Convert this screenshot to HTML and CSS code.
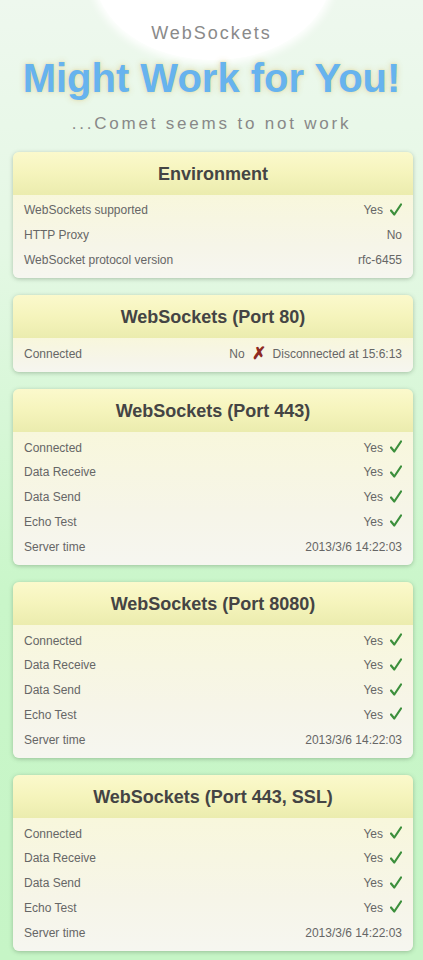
FILE: index.html
```html
<!DOCTYPE html>
<html lang="en">
<head>
    <meta charset="UTF-8">
    <meta name="viewport" content="width=device-width, initial-scale=1.0">
    <title>WebSockets Test</title>
    <link rel="stylesheet" href="styles.css">
</head>
<body>
    <header class="top">
        <div class="glow"></div>
        <h2 class="subtitle">WebSockets</h2>
        <h1 class="verdict">Might Work for You!</h1>
        <p class="note">...Comet seems to not work</p>
    </header>

    <div class="cards">
        <div class="card">
            <div class="card-head">Environment</div>
            <div class="card-body">
                <div class="row"><span>WebSockets supported</span><span class="val">Yes <svg class="ok" viewBox="0 0 12 13"><path d="M1 7.5 L4.3 11.5 L11 1.5"/></svg></span></div>
                <div class="row"><span>HTTP Proxy</span><span class="val">No</span></div>
                <div class="row"><span>WebSocket protocol version</span><span class="val">rfc-6455</span></div>
            </div>
        </div>

        <div class="card">
            <div class="card-head">WebSockets (Port 80)</div>
            <div class="card-body">
                <div class="row"><span>Connected</span><span class="val">No <i class="fail">&#10007;</i> Disconnected at 15:6:13</span></div>
            </div>
        </div>

        <div class="card">
            <div class="card-head">WebSockets (Port 443)</div>
            <div class="card-body">
                <div class="row"><span>Connected</span><span class="val">Yes <svg class="ok" viewBox="0 0 12 13"><path d="M1 7.5 L4.3 11.5 L11 1.5"/></svg></span></div>
                <div class="row"><span>Data Receive</span><span class="val">Yes <svg class="ok" viewBox="0 0 12 13"><path d="M1 7.5 L4.3 11.5 L11 1.5"/></svg></span></div>
                <div class="row"><span>Data Send</span><span class="val">Yes <svg class="ok" viewBox="0 0 12 13"><path d="M1 7.5 L4.3 11.5 L11 1.5"/></svg></span></div>
                <div class="row"><span>Echo Test</span><span class="val">Yes <svg class="ok" viewBox="0 0 12 13"><path d="M1 7.5 L4.3 11.5 L11 1.5"/></svg></span></div>
                <div class="row"><span>Server time</span><span class="val">2013/3/6 14:22:03</span></div>
            </div>
        </div>

        <div class="card">
            <div class="card-head">WebSockets (Port 8080)</div>
            <div class="card-body">
                <div class="row"><span>Connected</span><span class="val">Yes <svg class="ok" viewBox="0 0 12 13"><path d="M1 7.5 L4.3 11.5 L11 1.5"/></svg></span></div>
                <div class="row"><span>Data Receive</span><span class="val">Yes <svg class="ok" viewBox="0 0 12 13"><path d="M1 7.5 L4.3 11.5 L11 1.5"/></svg></span></div>
                <div class="row"><span>Data Send</span><span class="val">Yes <svg class="ok" viewBox="0 0 12 13"><path d="M1 7.5 L4.3 11.5 L11 1.5"/></svg></span></div>
                <div class="row"><span>Echo Test</span><span class="val">Yes <svg class="ok" viewBox="0 0 12 13"><path d="M1 7.5 L4.3 11.5 L11 1.5"/></svg></span></div>
                <div class="row"><span>Server time</span><span class="val">2013/3/6 14:22:03</span></div>
            </div>
        </div>

        <div class="card">
            <div class="card-head">WebSockets (Port 443, SSL)</div>
            <div class="card-body">
                <div class="row"><span>Connected</span><span class="val">Yes <svg class="ok" viewBox="0 0 12 13"><path d="M1 7.5 L4.3 11.5 L11 1.5"/></svg></span></div>
                <div class="row"><span>Data Receive</span><span class="val">Yes <svg class="ok" viewBox="0 0 12 13"><path d="M1 7.5 L4.3 11.5 L11 1.5"/></svg></span></div>
                <div class="row"><span>Data Send</span><span class="val">Yes <svg class="ok" viewBox="0 0 12 13"><path d="M1 7.5 L4.3 11.5 L11 1.5"/></svg></span></div>
                <div class="row"><span>Echo Test</span><span class="val">Yes <svg class="ok" viewBox="0 0 12 13"><path d="M1 7.5 L4.3 11.5 L11 1.5"/></svg></span></div>
                <div class="row"><span>Server time</span><span class="val">2013/3/6 14:22:03</span></div>
            </div>
        </div>
    </div>
</body>
</html>
```

FILE: styles.css
```css
* {
    margin: 0;
    padding: 0;
    box-sizing: border-box;
    font-family: "Liberation Sans", Arial, sans-serif;
}

body {
    background: linear-gradient(to bottom, #eef8ee 0px, #e4f8e4 250px, #c9f6c9 600px, #c6f5c6 100%);
    min-height: 960px;
    overflow: hidden;
}

.top {
    position: relative;
    text-align: center;
    padding-top: 22px;
    height: 152px;
}

.glow {
    position: absolute;
    left: 95px;
    top: -110px;
    width: 236px;
    height: 170px;
    border-radius: 50%;
    background: #fff;
    box-shadow: 0 0 8px 4px #fff;
}

.subtitle {
    position: relative;
    font-size: 18px;
    line-height: 22px;
    font-weight: normal;
    letter-spacing: 2px;
    color: #8a8a8a;
}

.verdict {
    position: relative;
    font-size: 40px;
    line-height: 46px;
    margin-top: 11px;
    color: #67b3ee;
    text-shadow: 0 0 6px rgba(225, 215, 160, 0.9), 0 0 2px rgba(230, 220, 170, 0.8);
}

.note {
    position: relative;
    margin-top: 12px;
    font-size: 17px;
    line-height: 22px;
    letter-spacing: 2.8px;
    color: #888;
}

.cards {
    width: 400px;
    margin-left: 13px;
    display: flex;
    flex-direction: column;
    gap: 17px;
}

.card {
    border-radius: 6px;
    overflow: hidden;
    box-shadow: 0 1px 4px rgba(60, 90, 60, 0.35);
}

.card-head {
    height: 43px;
    padding-top: 2px;
    line-height: 41px;
    text-align: center;
    font-size: 18px;
    font-weight: bold;
    color: #444;
    background: linear-gradient(to bottom, #fbf9cc 0%, #f5f4bc 50%, #ebecae 100%);
}

.card-body {
    padding: 3px 11px 6px;
    background: linear-gradient(to bottom, #f8f7dc 0%, #f6f5e8 60%, #f6f6f0 100%);
}

.row {
    display: flex;
    justify-content: space-between;
    align-items: center;
    height: 24.8px;
    font-size: 12px;
    color: #666;
}

.val {
    display: flex;
    align-items: center;
    gap: 7px;
}

.ok {
    width: 12px;
    height: 13px;
    margin-top: -2px;
    fill: none;
    stroke: #3c8f3c;
    stroke-width: 2.2;
    stroke-linecap: round;
    stroke-linejoin: round;
}

.fail {
    font-style: normal;
    font-size: 17px;
    font-weight: bold;
    color: #8e2a22;
}
```
